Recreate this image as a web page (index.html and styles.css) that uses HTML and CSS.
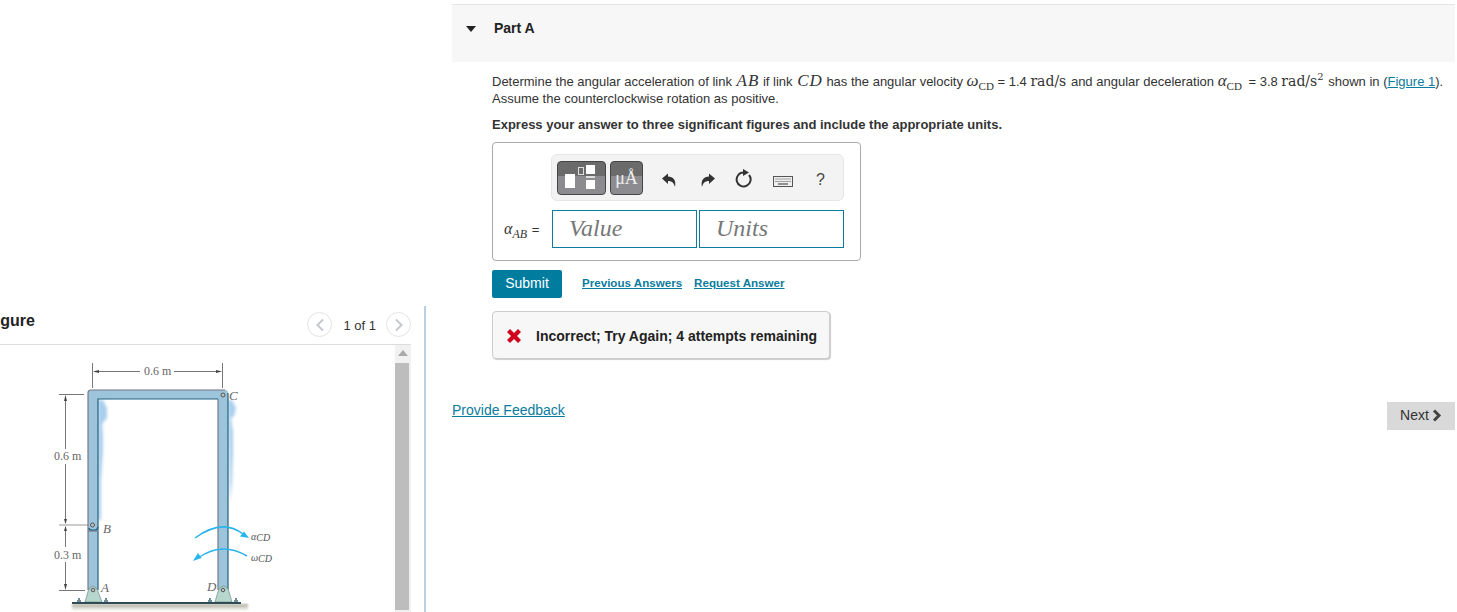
FILE: index.html
```html
<!DOCTYPE html>
<html lang="en">
<head>
  <meta charset="UTF-8">
  <meta name="viewport" content="width=device-width, initial-scale=1.0">
  <title>Part A</title>
  <link rel="stylesheet" href="styles.css">
</head>
<body>
  <div class="page">
    <div class="figure-panel">
      <div class="figure-head">
        <h2 class="figure-title">Figure</h2>
        <div class="pager">
          <button class="pager-btn"><svg width="10" height="14" viewBox="0 0 10 14"><path d="M8 1.500 2.500 7 8 12.500" class="pager-arrow"/></svg></button>
          <span class="pager-text">1 of 1</span>
          <button class="pager-btn"><svg width="10" height="14" viewBox="0 0 10 14"><path d="M2 1.500 7.500 7 2 12.500" class="pager-arrow"/></svg></button>
        </div>
      </div>
      <div class="figure-body">
        <svg class="diagram" width="395" height="267" viewBox="0 345 395 267">
          <defs>
            <filter id="soft"><feGaussianBlur stdDeviation="1.6"/></filter>
            <filter id="softer"><feGaussianBlur stdDeviation="0.8"/></filter>
            <linearGradient id="ground" x1="0" y1="0" x2="0" y2="1">
              <stop offset="0" stop-color="#a9a998"/>
              <stop offset="1" stop-color="#ffffff"/>
            </linearGradient>
          </defs>

          <!-- smudges beside the frame -->
          <g class="smudge" filter="url(#soft)">
            <path d="M98 400h5l4 8 0 10-5 6 1 12 0 14-2 30 0 40-3 0z"/>
            <path d="M228 400h4l4 8-2 8-3 2 2 14 0 20-1 30-2 20z"/>
          </g>

          <!-- dimension lines -->
          <g class="dim">
            <path d="M92.500 363V388M222.500 363V388"/>
            <path d="M94 371.500H140M174 371.500H220"/>
            <path d="M59 394.500H84M59 590.500H85"/>
            <path d="M65.500 396V449M65.500 464V523M65.500 527V547M65.500 562V588"/>
          </g>
          <path class="dim-pale" d="M59 525H90"/>
          <g class="dim-head">
            <path d="M93 371.500l6-1.500v3zM222 371.500l-6-1.500v3z"/>
            <path d="M65.500 395l-1.500 6h3zM65.500 524l-1.500-5h3zM65.500 526l-1.500 5h3zM65.500 590l-1.500-6h3z"/>
          </g>

          <!-- frame -->
          <path class="bar" d="M88 393q0-3 3-3H225q3 0 3 3V590H218V399H98V590H88z"/>
          <path class="bar-dark" d="M98 590V399H218"/>
          <path class="bar-edge" d="M88 590V393q0-3 3-3H225"/>
          <path class="bar-edge" d="M218 399V590"/>
          <path class="bar-dark" d="M228 393V590"/>
          <path class="bar-edge" d="M88 531H98"/>
          <path class="bar-dark" d="M89 528q0 2 3 2h3q2 0 3-3"/>
          <circle class="pin" cx="92.500" cy="525" r="2"/>
          <circle class="pin" cx="223" cy="395" r="2"/>

          <!-- supports -->
          <g class="support">
            <path d="M85 602 88.500 590q4-8 9 0L102 602z"/>
            <path d="M215 602 218.500 590q5-8 10 0L232 602z"/>
          </g>
          <circle class="pin" cx="93" cy="590" r="1.800"/>
          <circle class="pin" cx="223" cy="590" r="1.800"/>
          <g class="bolt">
            <path d="M77 602v-2h1v-2h2v2h1v2zM104 602v-2h1v-2h2v2h1v2zM208 602v-2h1v-2h2v2h1v2zM234 602v-2h1v-2h2v2h1v2z"/>
          </g>
          <rect class="ground" x="72" y="604" width="176" height="7" filter="url(#softer)"/>
          <rect class="plate" x="72" y="602" width="169" height="2"/>

          <!-- rotation arrows -->
          <path class="spin" d="M195 538Q222 518 243 534"/>
          <path class="spin-head" d="M249 538l-9-1.500 4-5z"/>
          <path class="spin" d="M198 558Q222 541 247 556"/>
          <path class="spin-head" d="M193 561l5-8 3.500 5z"/>

          <!-- labels -->
          <text class="dim-label" x="144" y="375">0.6 m</text>
          <text class="dim-label" x="54" y="460">0.6 m</text>
          <text class="dim-label" x="54" y="559">0.3 m</text>
          <text class="point" x="103" y="533">B</text>
          <text class="point" x="229" y="400">C</text>
          <text class="point" x="101" y="592">A</text>
          <text class="point" x="207" y="591">D</text>
          <text class="sym" x="251" y="540">α<tspan dy="1">CD</tspan></text>
          <text class="sym" x="251" y="561">ω<tspan dy="1">CD</tspan></text>
        </svg>
        <div class="scrollbar">
          <div class="scroll-up"></div>
          <div class="scroll-thumb"></div>
        </div>
      </div>
    </div>

    <div class="main">
      <div class="part-head">
        <span class="part-caret"></span>
        <h3 class="part-title">Part A</h3>
      </div>

      <div class="part-body">
        <p class="question">Determine the angular acceleration of link <span class="mi">AB</span> if link <span class="mi">CD</span> has the angular velocity <span class="mi-sm">ω</span><sub class="msub">CD</sub> = 1.4 <span class="mu">rad/s</span> and angular deceleration <span class="mi-sm">α</span><sub class="msub msub-wide">CD</sub> = 3.8 <span class="mu">rad/s<sup class="msup">2</sup></span> shown in (<a href="#" class="link">Figure 1</a>).<br>Assume the counterclockwise rotation as positive.</p>
        <p class="instruction">Express your answer to three significant figures and include the appropriate units.</p>

        <div class="answer-box">
          <div class="toolbar">
            <button class="tool-btn tool-templates">
              <svg width="47" height="32" viewBox="0 0 47 32">
                <rect x="7" y="12" width="10" height="14" fill="#fff"/>
                <rect x="20.500" y="5.500" width="5" height="7" fill="none" stroke="#ddd"/>
                <rect x="28" y="3" width="9" height="9" fill="#fff"/>
                <rect x="28" y="14" width="9" height="2" fill="#ddd"/>
                <rect x="28" y="18" width="9" height="9" fill="#fff"/>
              </svg>
            </button>
            <button class="tool-btn tool-units">μÅ</button>
            <div class="tool-icons">
              <svg width="16" height="16" viewBox="0 0 16 16"><path class="glyph" d="M1 6.500 7 1.500V4.500C12 4.500 15.500 8 14 15 13 11 11 9 7 9V12z"/></svg>
              <svg width="16" height="16" viewBox="0 0 16 16"><path class="glyph" d="M15 6.500 9 1.500V4.500C4 4.500 .5 8 2 15 3 11 5 9 9 9V12z"/></svg>
              <svg width="18" height="19" viewBox="0 0 18 19"><path class="ring" d="M8.500 3.500A7 7 0 1 0 14 6"/><path class="glyph" d="M8 0 14 3.500 8 7z"/></svg>
              <svg width="20" height="11" viewBox="0 0 20 11"><rect x=".5" y=".5" width="19" height="10" fill="#eee" stroke="#555"/><path d="M2.500 3h15M2.500 5.500h15" stroke="#555" stroke-width="1.200" stroke-dasharray="1 1"/><path d="M5 8h10" stroke="#555" stroke-width="1.200"/></svg>
              <span class="tool-help">?</span>
            </div>
          </div>
          <div class="answer-row">
            <label class="answer-label"><span class="al-var">α</span><sub class="al-sub">AB</sub> =</label>
            <input class="answer-input" type="text" placeholder="Value">
            <input class="answer-input" type="text" placeholder="Units">
          </div>
        </div>

        <div class="actions">
          <button class="submit">Submit</button>
          <a href="#" class="action-link">Previous Answers</a>
          <a href="#" class="action-link">Request Answer</a>
        </div>

        <div class="feedback">
          <svg width="14" height="14" viewBox="0 0 14 14"><path d="M0 3 3 0 7 4 11 0 14 3 10 7 14 11 11 14 7 10 3 14 0 11 4 7z" fill="#d0021b"/></svg>
          <span>Incorrect; Try Again; 4 attempts remaining</span>
        </div>
      </div>

      <div class="foot">
        <a href="#" class="link foot-link">Provide Feedback</a>
        <button class="next">Next <svg width="10" height="13" viewBox="0 0 10 13"><path d="M2 1.500 7 6.500 2 11.500" fill="none" stroke="#444" stroke-width="3"/></svg></button>
      </div>
    </div>
  </div>
</body>
</html>
```

FILE: styles.css
```css
* { box-sizing: border-box; }
html, body { margin: 0; height: 100%; overflow: hidden; }
body { font-family: "Liberation Sans", Arial, sans-serif; font-size: 14px; color: #333; background: #fff; }
button { font-family: inherit; cursor: pointer; }
p, h2, h3 { margin: 0; }

.page { display: flex; height: 612px; }

/* left panel */
.figure-panel { flex: none; width: 426px; height: 306px; margin-top: 306px; padding-right: 13px; border-right: 2px solid #bccfe2; }
.figure-head { display: flex; justify-content: space-between; align-items: flex-start; height: 39px; border-bottom: 1px solid #ddd; overflow: hidden; }
.figure-title { margin: 5px 0 0 -14px; font-size: 16px; line-height: 20px; color: #222; }
.pager { display: flex; align-items: center; margin-top: 6px; }
.pager-btn { display: flex; align-items: center; justify-content: center; width: 25px; height: 25px; padding: 0; border: 1px solid #e3e3e3; border-radius: 50%; background: #fff; }
.pager-arrow { fill: none; stroke: #c4c9cf; stroke-width: 2; }
.pager-text { margin: 1px 10px 0 11px; font-size: 13px; color: #333; }
.figure-body { display: flex; height: 267px; }
.diagram { display: block; flex: none; }
.scrollbar { flex: none; width: 16px; background: #f1f1f1; }
.scroll-up { width: 0; height: 0; margin: 5px auto 0 3px; border: 5px solid transparent; border-top: 0; border-bottom: 6px solid #aaa; }
.scroll-thumb { width: 14px; height: 247px; margin-top: 7px; background: #bdbdbd; }

/* figure drawing */
.smudge { fill: #a9cfee; }
.dim { fill: none; stroke: #777; stroke-width: 1; }
.dim-pale { fill: none; stroke: #bbb; stroke-width: 1.500; }
.dim-head { fill: #444; }
.bar { fill: #9cc5dc; }
.bar-dark { fill: none; stroke: #23607f; stroke-width: 1.200; }
.bar-edge { fill: none; stroke: #778; stroke-width: 1.200; }
.pin { fill: #b7c4c4; stroke: #555; stroke-width: 1; }
.support { fill: #b7d6cd; stroke: #6d8c88; stroke-width: .7; }
.bolt { fill: #6e8f96; }
.plate { fill: #2f4b55; }
.ground { fill: url(#ground); }
.spin { fill: none; stroke: #29b4ec; stroke-width: 1.500; }
.spin-head { fill: #29b4ec; }
.dim-label { font-family: "Liberation Serif", serif; font-size: 12px; fill: #666; }
.point { font-family: "Liberation Serif", serif; font-style: italic; font-size: 13px; fill: #666; }
.sym { font-family: "Liberation Serif", serif; font-style: italic; font-size: 10px; fill: #555; }

/* right column */
.main { flex: 1; min-width: 0; padding: 4px 2px 0 26px; }
.part-head { display: flex; align-items: flex-start; height: 58px; padding: 15px 0 0 14px; background: #f7f7f7; border-top: 1px solid #e5e5e5; }
.part-caret { width: 0; height: 0; margin-top: 6px; border: 5px solid transparent; border-top: 6px solid #222; border-bottom: 0; }
.part-title { margin-left: 18px; font-size: 14px; line-height: 17px; color: #222; }
.part-body { padding: 10px 0 0 40px; }

.question { font-size: 13px; line-height: 17px; color: #333; white-space: nowrap; }
.mi { margin-left: 1px; font-family: "Liberation Serif", serif; font-style: italic; font-size: 17px; line-height: 1; letter-spacing: 1px; }
.mi-sm { font-family: "Liberation Serif", serif; font-style: italic; font-size: 17px; line-height: 1; }
.msub { font-family: "Liberation Serif", serif; font-size: 11px; line-height: 0; }
.msub-wide { margin-right: 3px; }
.mu { margin-right: 1px; font-family: "DejaVu Serif", serif; font-size: 14px; line-height: 1; }
.msup { font-size: 10px; line-height: 0; }
.link { color: #0a7c9e; }
.instruction { margin-top: 9px; font-size: 13px; font-weight: bold; line-height: 17px; }

.answer-box { width: 369px; height: 119px; margin-top: 9px; padding: 11px 0 0 11px; border: 1px solid #aaa; border-radius: 4px; }
.toolbar { display: flex; align-items: center; width: 293px; height: 47px; margin-left: 47px; padding-left: 5px; background: #f3f3f3; border: 1px solid #e6e6e6; border-radius: 6px; }
.tool-btn { height: 34px; padding: 0; margin-right: 4px; border: 1px solid #444; border-radius: 4px; background: linear-gradient(#6b6b6b 0 45%, #8c8c90 45% 100%); color: #eee; }
.tool-templates { width: 49px; }
.tool-templates svg { display: block; }
.tool-units { width: 33px; font-family: "Liberation Serif", serif; font-size: 18px; line-height: 20px; }
.tool-icons { display: flex; align-items: center; margin-left: 14px; }
.tool-icons svg { display: block; margin-top: 5px; margin-right: 23px; }
.tool-icons svg:nth-child(2) { margin-right: 19px; }
.tool-icons svg:nth-child(3) { margin-top: 2px; margin-right: 20px; }
.tool-icons svg:nth-child(4) { margin-top: 8px; margin-right: 23px; }
.tool-help { margin-top: 5px; font-size: 16px; color: #444; }
.ring { fill: none; stroke: #333; stroke-width: 2; }
.glyph { fill: #333; }

.answer-row { display: flex; align-items: center; margin-top: 9px; }
.answer-label { width: 48px; font-size: 13px; white-space: nowrap; }
.al-var { font-family: "Liberation Serif", serif; font-style: italic; font-size: 16px; }
.al-sub { font-family: "Liberation Serif", serif; font-style: italic; font-size: 12px; line-height: 0; margin-right: 1px; }
.answer-input { width: 145px; height: 38px; margin-right: 2px; padding: 0 0 2px 16px; border: 1px solid #0e7c9e; border-radius: 0; font-family: "Liberation Serif", serif; font-style: italic; font-size: 24px; color: #777; outline: none; }
.answer-input::placeholder { color: #777; opacity: 1; }

.actions { display: flex; align-items: center; margin-top: 9px; }
.submit { width: 70px; height: 28px; padding: 0 0 2px; border: 0; border-radius: 2px; background: #007c9f; color: #fff; font-size: 14px; }
.action-link { margin: 0 0 3px 20px; font-size: 11.6px; font-weight: bold; color: #0a7c9e; }
.action-link + .action-link { margin-left: 12px; }

.feedback { display: flex; align-items: center; width: 338px; height: 48px; margin-top: 13px; padding: 1px 0 0 14px; background: #f7f7f7; border: 1px solid #ccc; border-radius: 4px; box-shadow: 1px 1px 1px #ccc; font-weight: bold; color: #222; white-space: nowrap; }
.feedback span { margin-left: 15px; }

.foot { display: flex; justify-content: space-between; align-items: flex-start; margin-top: 42px; }
.foot-link { margin-top: 1px; }
.next { display: flex; align-items: center; justify-content: center; gap: 3px; width: 68px; height: 28px; margin-top: 1px; padding: 0 0 2px; border: 0; background: #d9d9d9; color: #333; font-size: 14px; }
```
